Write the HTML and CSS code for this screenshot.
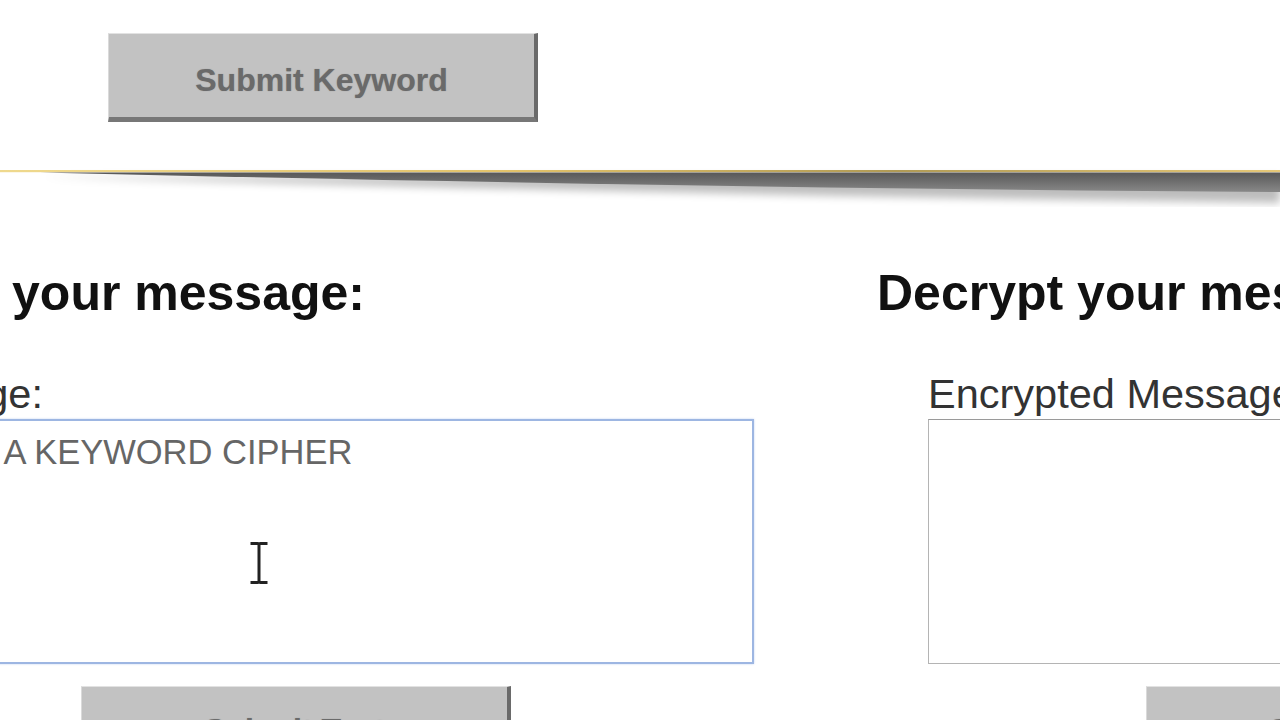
FILE: index.html
```html
<!DOCTYPE html>
<html lang="en">
<head>
<meta charset="utf-8">
<title>Keyword Cipher</title>
<link rel="stylesheet" href="styles.css">
</head>
<body>
<div class="page">
  <div class="keyword-bar">
    <button class="btn" type="button">Submit Keyword</button>
  </div>

  <svg class="divider" viewBox="0 0 1280 46" preserveAspectRatio="none" aria-hidden="true">
    <defs>
      <linearGradient id="band" x1="0" y1="0" x2="0" y2="1">
        <stop offset="0" stop-color="#585858"/>
        <stop offset="0.5" stop-color="#707070"/>
        <stop offset="1" stop-color="#888888"/>
      </linearGradient>
      <linearGradient id="gold" x1="0" y1="0" x2="1" y2="0">
        <stop offset="0" stop-color="#efd98e"/>
        <stop offset="0.4" stop-color="#e2c26a"/>
        <stop offset="0.7" stop-color="#b09a55"/>
        <stop offset="1" stop-color="#e6c878"/>
      </linearGradient>
      <filter id="soft" x="-5%" y="-100%" width="110%" height="300%">
        <feGaussianBlur stdDeviation="4"/>
      </filter>
    </defs>
    <path d="M40 12 L1280 12 L1280 38 C 900 33, 500 24, 40 12 Z" fill="#000" opacity="0.26" filter="url(#soft)" transform="translate(0,4)"/>
    <rect x="0" y="9" width="1280" height="2.2" fill="url(#gold)"/>
    <path d="M40 11.5 L1280 11.5 L1280 31 C 900 28.5, 480 22, 40 11.5 Z" fill="url(#band)"/>
  </svg>

  <div class="columns">
    <section class="col">
      <h2 class="col-title">Encrypt your message:</h2>
      <div class="field">
        <label class="field-label" for="plain">Message:</label>
        <textarea id="plain" class="box box-focus">THIS IS A KEYWORD CIPHER</textarea>
        <button class="btn btn-action" type="button">Submit Text</button>
      </div>
    </section>
    <section class="col">
      <h2 class="col-title">Decrypt your message:</h2>
      <div class="field">
        <label class="field-label" for="cipher">Encrypted Message:</label>
        <textarea id="cipher" class="box"></textarea>
        <button class="btn btn-action" type="button">Submit Text</button>
      </div>
    </section>
  </div>

  <svg class="ibeam" viewBox="0 0 18 44" aria-hidden="true">
    <path d="M2 2.5 H7.5 Q9 2.5 9 4 Q9 2.5 10.5 2.5 H16 M9 4 V40 M2 41.5 H7.5 Q9 41.5 9 40 Q9 41.5 10.5 41.5 H16" fill="none" stroke="#222222" stroke-width="3" stroke-linecap="square"/>
  </svg>
</div>
</body>
</html>
```

FILE: styles.css
```css
* { box-sizing: border-box; }

html, body {
  margin: 0;
  padding: 0;
  background: #ffffff;
}

body {
  width: 1280px;
  height: 720px;
  overflow: hidden;
  font-family: "Liberation Sans", Arial, sans-serif;
}

.page {
  position: relative;
  width: 1280px;
  height: 720px;
  overflow: hidden;
}

.keyword-bar {
  padding: 33px 0 0 108px;
}

.btn {
  display: flex;
  align-items: center;
  justify-content: center;
  width: 430px;
  height: 89px;
  margin: 0;
  padding: 10px 0 0 0;
  background: #c2c2c2;
  border-style: solid;
  border-width: 1px 4px 5px 1px;
  border-color: #e2e2e2 #6a6a6a #777777 #dadada;
  font-family: "Liberation Sans", Arial, sans-serif;
  font-weight: bold;
  font-size: 32px;
  color: #6a6a6a;
  text-shadow: 0 0 1px rgba(90, 90, 90, 0.5);
}

.divider {
  display: block;
  width: 1280px;
  height: 46px;
  margin-top: 39px;
}

.columns {
  display: flex;
  margin-left: -188px;
  margin-top: 62px;
}

.col {
  flex: 0 0 1065px;
  width: 1065px;
}

.col-title {
  margin: 0;
  font-size: 50px;
  line-height: 48px;
  font-weight: bold;
  color: #111111;
  white-space: nowrap;
}

.field {
  display: flex;
  flex-direction: column;
  padding-left: 51px;
  margin-top: 56px;
}

.field-label {
  display: block;
  font-size: 41.5px;
  line-height: 41px;
  color: #333333;
  white-space: nowrap;
}

.box {
  display: block;
  width: 891px;
  height: 245px;
  margin: 5px 0 0 0;
  padding: 11px 10px;
  resize: none;
  overflow: hidden;
  background: #ffffff;
  border: 1px solid #b4b4b4;
  border-top-color: #9a9a9a;
  outline: none;
  font-family: "Liberation Sans", Arial, sans-serif;
  font-size: 34.5px;
  line-height: 40px;
  color: #666666;
}

.box-focus {
  border: 2px solid #9db6e2;
  box-shadow: 0 0 2px #c2d3f1;
}

.btn-action {
  margin-top: 22px;
  margin-left: 218px;
  width: 430px;
  padding-top: 4px;
}

.ibeam {
  position: absolute;
  left: 250px;
  top: 541px;
  width: 18px;
  height: 44px;
}
```
